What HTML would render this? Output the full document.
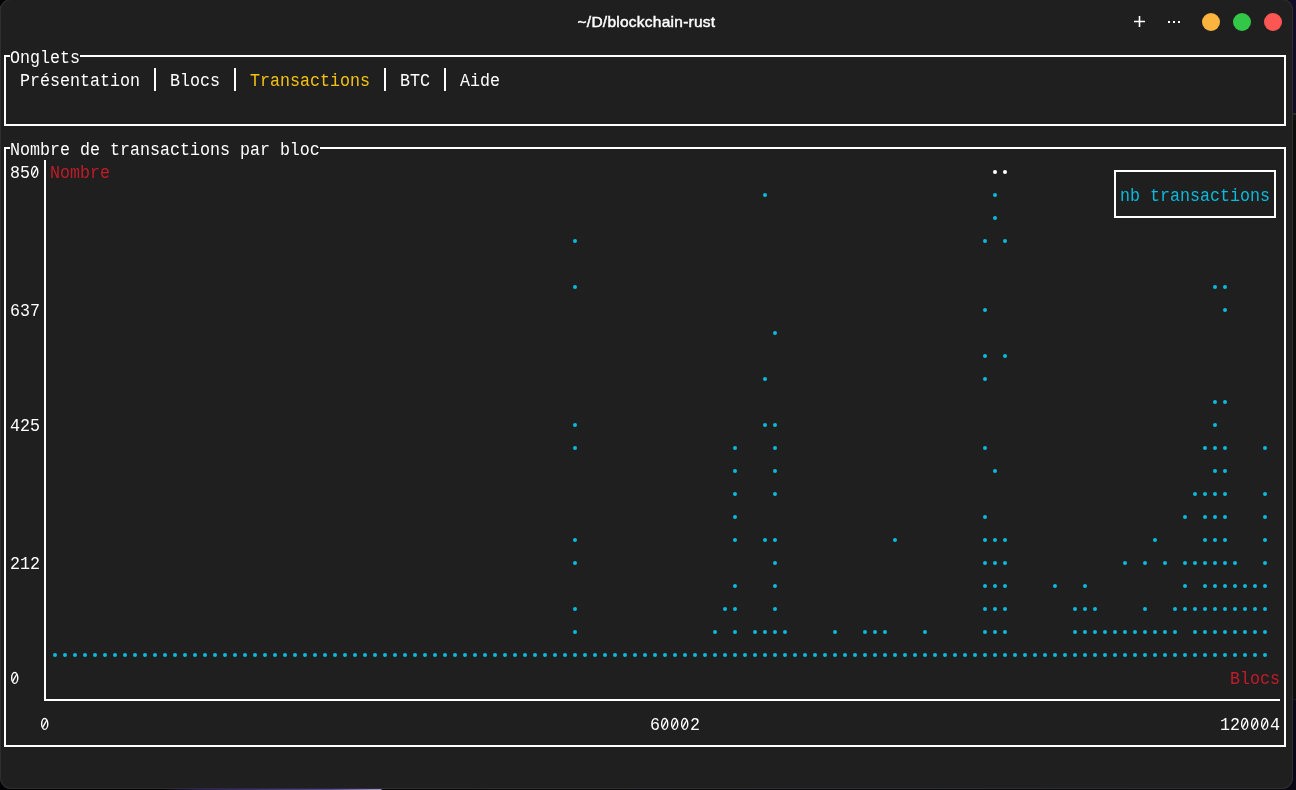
<!DOCTYPE html>
<html><head><meta charset="utf-8"><style>
html,body{margin:0;padding:0;}
body{width:1296px;height:790px;overflow:hidden;position:relative;background:#08050d;}
#wall{position:absolute;left:0;top:0;width:1296px;height:790px;background:#020104;}
#wallr{position:absolute;left:1280px;top:0;width:16px;height:790px;background:linear-gradient(180deg,#140d28 0px,#120b24 113px,#2a2a2a 113px,#2a2a2a 115px,#121212 115px,#121212 120px,#0c0c0c 120px,#0c0c0c 699px,#1a1a1a 699px,#1a1a1a 700px,#0a0716 700px,#0a0716 790px);}
#frame{position:absolute;left:0;top:-1px;width:1293px;height:790px;background:#1f1f1f;border-radius:11px;box-shadow:inset 0 0 0 1px #2e2e2e;}
#win{will-change:transform;position:absolute;left:0;top:0;width:1293px;height:789px;}
#title{position:absolute;left:0;width:1293px;top:13px;text-align:center;font:normal 15.5px "Liberation Sans",sans-serif;color:#ffffff;line-height:18px;letter-spacing:0.25px;-webkit-text-stroke:0.45px #fff;}
#term{position:absolute;left:0;top:0;width:1293px;height:789px;}
#term i{position:absolute;display:block;}
#term b{position:absolute;font-weight:normal;font-family:"Liberation Mono",monospace;font-size:16.664px;line-height:23px;white-space:pre;transform:scaleY(1.07);transform-origin:0 16px;}
#term u{position:absolute;display:block;width:4.2px;height:4.4px;border-radius:50%;}
.circ{position:absolute;width:18px;height:18px;border-radius:50%;}
</style></head><body>
<div id="wall"></div><div id="wallr"></div><div style="position:absolute;left:0;top:6px;width:1px;height:2px;background:#5b3f8c"></div><div style="position:absolute;left:0;top:789px;width:1296px;height:1px;background:linear-gradient(90deg,#000 0px,#000 160px,#2a1a5a 200px,#5a48a0 330px,#a898c8 381px,#08080c 382px,#0a0a12 1296px)"></div>
<div id="frame"></div><div id="win">
<div id="title">~/D/blockchain-rust</div>
<svg style="position:absolute;left:1133px;top:15px" width="13" height="13" viewBox="0 0 13 13"><path d="M6.5 1V12M1 6.5H12" stroke="#fff" stroke-width="1.6"/></svg>
<i style="position:absolute;left:1168px;top:21px;width:2px;height:2px;background:#fff"></i>
<i style="position:absolute;left:1173px;top:21px;width:2px;height:2px;background:#fff"></i>
<i style="position:absolute;left:1178px;top:21px;width:2px;height:2px;background:#fff"></i>
<div class="circ" style="left:1202px;top:13px;background:#fbb43e"></div>
<div class="circ" style="left:1233px;top:13px;background:#33c748"></div>
<div class="circ" style="left:1264px;top:13px;background:#fe5753"></div>
<div id="term">
<i style="left:4px;top:55px;width:6px;height:2px;background:#ffffff"></i><i style="left:80px;top:55px;width:1206px;height:2px;background:#ffffff"></i><i style="left:4px;top:124px;width:1282px;height:2px;background:#ffffff"></i><i style="left:4px;top:55px;width:2px;height:71px;background:#ffffff"></i><i style="left:1284px;top:55px;width:2px;height:71px;background:#ffffff"></i><i style="left:154px;top:68px;width:2px;height:23px;background:#ffffff"></i><i style="left:234px;top:68px;width:2px;height:23px;background:#ffffff"></i><i style="left:384px;top:68px;width:2px;height:23px;background:#ffffff"></i><i style="left:444px;top:68px;width:2px;height:23px;background:#ffffff"></i><i style="left:4px;top:147px;width:6px;height:2px;background:#ffffff"></i><i style="left:320px;top:147px;width:966px;height:2px;background:#ffffff"></i><i style="left:4px;top:745px;width:1282px;height:2px;background:#ffffff"></i><i style="left:4px;top:147px;width:2px;height:600px;background:#ffffff"></i><i style="left:1284px;top:147px;width:2px;height:600px;background:#ffffff"></i><i style="left:44px;top:160px;width:2px;height:541px;background:#ffffff"></i><i style="left:44px;top:699px;width:1236px;height:2px;background:#ffffff"></i><i style="left:1114px;top:170px;width:162px;height:2px;background:#ffffff"></i><i style="left:1114px;top:216px;width:162px;height:2px;background:#ffffff"></i><i style="left:1114px;top:170px;width:2px;height:48px;background:#ffffff"></i><i style="left:1274px;top:170px;width:2px;height:48px;background:#ffffff"></i>
<b style="left:10px;top:47px;color:#ffffff">Onglets</b><b style="left:20px;top:70px;color:#ffffff">Présentation</b><b style="left:170px;top:70px;color:#ffffff">Blocs</b><b style="left:250px;top:70px;color:#f5c211">Transactions</b><b style="left:400px;top:70px;color:#ffffff">BTC</b><b style="left:460px;top:70px;color:#ffffff">Aide</b><b style="left:10px;top:139px;color:#ffffff">Nombre de transactions par bloc</b><b style="left:10px;top:162px;color:#ffffff">85 </b><b style="left:10px;top:300px;color:#ffffff">637</b><b style="left:10px;top:415px;color:#ffffff">425</b><b style="left:10px;top:553px;color:#ffffff">212</b><b style="left:10px;top:668px;color:#ffffff"> </b><b style="left:50px;top:162px;color:#c01c28">Nombre</b><b style="left:1230px;top:668px;color:#c01c28">Blocs</b><b style="left:40px;top:714px;color:#ffffff"> </b><b style="left:650px;top:714px;color:#ffffff">6   2</b><b style="left:1220px;top:714px;color:#ffffff">12   4</b><b style="left:1120px;top:185px;color:#0ab9dc">nb transactions</b>
<u style="left:762.90px;top:192.80px;background:#0ab9dc"></u><u style="left:992.90px;top:192.80px;background:#0ab9dc"></u><u style="left:992.90px;top:215.80px;background:#0ab9dc"></u><u style="left:572.90px;top:238.80px;background:#0ab9dc"></u><u style="left:982.90px;top:238.80px;background:#0ab9dc"></u><u style="left:1002.90px;top:238.80px;background:#0ab9dc"></u><u style="left:572.90px;top:284.80px;background:#0ab9dc"></u><u style="left:1212.90px;top:284.80px;background:#0ab9dc"></u><u style="left:1222.90px;top:284.80px;background:#0ab9dc"></u><u style="left:982.90px;top:307.80px;background:#0ab9dc"></u><u style="left:1222.90px;top:307.80px;background:#0ab9dc"></u><u style="left:772.90px;top:330.80px;background:#0ab9dc"></u><u style="left:982.90px;top:353.80px;background:#0ab9dc"></u><u style="left:1002.90px;top:353.80px;background:#0ab9dc"></u><u style="left:762.90px;top:376.80px;background:#0ab9dc"></u><u style="left:982.90px;top:376.80px;background:#0ab9dc"></u><u style="left:1212.90px;top:399.80px;background:#0ab9dc"></u><u style="left:1222.90px;top:399.80px;background:#0ab9dc"></u><u style="left:572.90px;top:422.80px;background:#0ab9dc"></u><u style="left:762.90px;top:422.80px;background:#0ab9dc"></u><u style="left:772.90px;top:422.80px;background:#0ab9dc"></u><u style="left:1212.90px;top:422.80px;background:#0ab9dc"></u><u style="left:572.90px;top:445.80px;background:#0ab9dc"></u><u style="left:732.90px;top:445.80px;background:#0ab9dc"></u><u style="left:772.90px;top:445.80px;background:#0ab9dc"></u><u style="left:982.90px;top:445.80px;background:#0ab9dc"></u><u style="left:1202.90px;top:445.80px;background:#0ab9dc"></u><u style="left:1212.90px;top:445.80px;background:#0ab9dc"></u><u style="left:1222.90px;top:445.80px;background:#0ab9dc"></u><u style="left:1262.90px;top:445.80px;background:#0ab9dc"></u><u style="left:732.90px;top:468.80px;background:#0ab9dc"></u><u style="left:772.90px;top:468.80px;background:#0ab9dc"></u><u style="left:992.90px;top:468.80px;background:#0ab9dc"></u><u style="left:1212.90px;top:468.80px;background:#0ab9dc"></u><u style="left:1222.90px;top:468.80px;background:#0ab9dc"></u><u style="left:732.90px;top:491.80px;background:#0ab9dc"></u><u style="left:772.90px;top:491.80px;background:#0ab9dc"></u><u style="left:1192.90px;top:491.80px;background:#0ab9dc"></u><u style="left:1202.90px;top:491.80px;background:#0ab9dc"></u><u style="left:1212.90px;top:491.80px;background:#0ab9dc"></u><u style="left:1222.90px;top:491.80px;background:#0ab9dc"></u><u style="left:1262.90px;top:491.80px;background:#0ab9dc"></u><u style="left:732.90px;top:514.80px;background:#0ab9dc"></u><u style="left:982.90px;top:514.80px;background:#0ab9dc"></u><u style="left:1182.90px;top:514.80px;background:#0ab9dc"></u><u style="left:1202.90px;top:514.80px;background:#0ab9dc"></u><u style="left:1212.90px;top:514.80px;background:#0ab9dc"></u><u style="left:1222.90px;top:514.80px;background:#0ab9dc"></u><u style="left:1262.90px;top:514.80px;background:#0ab9dc"></u><u style="left:572.90px;top:537.80px;background:#0ab9dc"></u><u style="left:732.90px;top:537.80px;background:#0ab9dc"></u><u style="left:762.90px;top:537.80px;background:#0ab9dc"></u><u style="left:772.90px;top:537.80px;background:#0ab9dc"></u><u style="left:892.90px;top:537.80px;background:#0ab9dc"></u><u style="left:982.90px;top:537.80px;background:#0ab9dc"></u><u style="left:992.90px;top:537.80px;background:#0ab9dc"></u><u style="left:1002.90px;top:537.80px;background:#0ab9dc"></u><u style="left:1152.90px;top:537.80px;background:#0ab9dc"></u><u style="left:1202.90px;top:537.80px;background:#0ab9dc"></u><u style="left:1212.90px;top:537.80px;background:#0ab9dc"></u><u style="left:1222.90px;top:537.80px;background:#0ab9dc"></u><u style="left:1262.90px;top:537.80px;background:#0ab9dc"></u><u style="left:572.90px;top:560.80px;background:#0ab9dc"></u><u style="left:772.90px;top:560.80px;background:#0ab9dc"></u><u style="left:982.90px;top:560.80px;background:#0ab9dc"></u><u style="left:992.90px;top:560.80px;background:#0ab9dc"></u><u style="left:1002.90px;top:560.80px;background:#0ab9dc"></u><u style="left:1122.90px;top:560.80px;background:#0ab9dc"></u><u style="left:1142.90px;top:560.80px;background:#0ab9dc"></u><u style="left:1162.90px;top:560.80px;background:#0ab9dc"></u><u style="left:1182.90px;top:560.80px;background:#0ab9dc"></u><u style="left:1192.90px;top:560.80px;background:#0ab9dc"></u><u style="left:1202.90px;top:560.80px;background:#0ab9dc"></u><u style="left:1212.90px;top:560.80px;background:#0ab9dc"></u><u style="left:1222.90px;top:560.80px;background:#0ab9dc"></u><u style="left:1232.90px;top:560.80px;background:#0ab9dc"></u><u style="left:1262.90px;top:560.80px;background:#0ab9dc"></u><u style="left:732.90px;top:583.80px;background:#0ab9dc"></u><u style="left:772.90px;top:583.80px;background:#0ab9dc"></u><u style="left:982.90px;top:583.80px;background:#0ab9dc"></u><u style="left:992.90px;top:583.80px;background:#0ab9dc"></u><u style="left:1002.90px;top:583.80px;background:#0ab9dc"></u><u style="left:1052.90px;top:583.80px;background:#0ab9dc"></u><u style="left:1082.90px;top:583.80px;background:#0ab9dc"></u><u style="left:1182.90px;top:583.80px;background:#0ab9dc"></u><u style="left:1202.90px;top:583.80px;background:#0ab9dc"></u><u style="left:1212.90px;top:583.80px;background:#0ab9dc"></u><u style="left:1222.90px;top:583.80px;background:#0ab9dc"></u><u style="left:1232.90px;top:583.80px;background:#0ab9dc"></u><u style="left:1242.90px;top:583.80px;background:#0ab9dc"></u><u style="left:1252.90px;top:583.80px;background:#0ab9dc"></u><u style="left:1262.90px;top:583.80px;background:#0ab9dc"></u><u style="left:572.90px;top:606.80px;background:#0ab9dc"></u><u style="left:722.90px;top:606.80px;background:#0ab9dc"></u><u style="left:732.90px;top:606.80px;background:#0ab9dc"></u><u style="left:772.90px;top:606.80px;background:#0ab9dc"></u><u style="left:982.90px;top:606.80px;background:#0ab9dc"></u><u style="left:992.90px;top:606.80px;background:#0ab9dc"></u><u style="left:1002.90px;top:606.80px;background:#0ab9dc"></u><u style="left:1072.90px;top:606.80px;background:#0ab9dc"></u><u style="left:1082.90px;top:606.80px;background:#0ab9dc"></u><u style="left:1092.90px;top:606.80px;background:#0ab9dc"></u><u style="left:1142.90px;top:606.80px;background:#0ab9dc"></u><u style="left:1172.90px;top:606.80px;background:#0ab9dc"></u><u style="left:1182.90px;top:606.80px;background:#0ab9dc"></u><u style="left:1192.90px;top:606.80px;background:#0ab9dc"></u><u style="left:1202.90px;top:606.80px;background:#0ab9dc"></u><u style="left:1212.90px;top:606.80px;background:#0ab9dc"></u><u style="left:1222.90px;top:606.80px;background:#0ab9dc"></u><u style="left:1232.90px;top:606.80px;background:#0ab9dc"></u><u style="left:1242.90px;top:606.80px;background:#0ab9dc"></u><u style="left:1252.90px;top:606.80px;background:#0ab9dc"></u><u style="left:1262.90px;top:606.80px;background:#0ab9dc"></u><u style="left:572.90px;top:629.80px;background:#0ab9dc"></u><u style="left:712.90px;top:629.80px;background:#0ab9dc"></u><u style="left:732.90px;top:629.80px;background:#0ab9dc"></u><u style="left:752.90px;top:629.80px;background:#0ab9dc"></u><u style="left:762.90px;top:629.80px;background:#0ab9dc"></u><u style="left:772.90px;top:629.80px;background:#0ab9dc"></u><u style="left:782.90px;top:629.80px;background:#0ab9dc"></u><u style="left:832.90px;top:629.80px;background:#0ab9dc"></u><u style="left:862.90px;top:629.80px;background:#0ab9dc"></u><u style="left:872.90px;top:629.80px;background:#0ab9dc"></u><u style="left:882.90px;top:629.80px;background:#0ab9dc"></u><u style="left:922.90px;top:629.80px;background:#0ab9dc"></u><u style="left:982.90px;top:629.80px;background:#0ab9dc"></u><u style="left:992.90px;top:629.80px;background:#0ab9dc"></u><u style="left:1002.90px;top:629.80px;background:#0ab9dc"></u><u style="left:1072.90px;top:629.80px;background:#0ab9dc"></u><u style="left:1082.90px;top:629.80px;background:#0ab9dc"></u><u style="left:1092.90px;top:629.80px;background:#0ab9dc"></u><u style="left:1102.90px;top:629.80px;background:#0ab9dc"></u><u style="left:1112.90px;top:629.80px;background:#0ab9dc"></u><u style="left:1122.90px;top:629.80px;background:#0ab9dc"></u><u style="left:1132.90px;top:629.80px;background:#0ab9dc"></u><u style="left:1142.90px;top:629.80px;background:#0ab9dc"></u><u style="left:1152.90px;top:629.80px;background:#0ab9dc"></u><u style="left:1162.90px;top:629.80px;background:#0ab9dc"></u><u style="left:1172.90px;top:629.80px;background:#0ab9dc"></u><u style="left:1192.90px;top:629.80px;background:#0ab9dc"></u><u style="left:1202.90px;top:629.80px;background:#0ab9dc"></u><u style="left:1212.90px;top:629.80px;background:#0ab9dc"></u><u style="left:1222.90px;top:629.80px;background:#0ab9dc"></u><u style="left:1232.90px;top:629.80px;background:#0ab9dc"></u><u style="left:1242.90px;top:629.80px;background:#0ab9dc"></u><u style="left:1252.90px;top:629.80px;background:#0ab9dc"></u><u style="left:1262.90px;top:629.80px;background:#0ab9dc"></u><u style="left:52.90px;top:652.80px;background:#0ab9dc"></u><u style="left:62.90px;top:652.80px;background:#0ab9dc"></u><u style="left:72.90px;top:652.80px;background:#0ab9dc"></u><u style="left:82.90px;top:652.80px;background:#0ab9dc"></u><u style="left:92.90px;top:652.80px;background:#0ab9dc"></u><u style="left:102.90px;top:652.80px;background:#0ab9dc"></u><u style="left:112.90px;top:652.80px;background:#0ab9dc"></u><u style="left:122.90px;top:652.80px;background:#0ab9dc"></u><u style="left:132.90px;top:652.80px;background:#0ab9dc"></u><u style="left:142.90px;top:652.80px;background:#0ab9dc"></u><u style="left:152.90px;top:652.80px;background:#0ab9dc"></u><u style="left:162.90px;top:652.80px;background:#0ab9dc"></u><u style="left:172.90px;top:652.80px;background:#0ab9dc"></u><u style="left:182.90px;top:652.80px;background:#0ab9dc"></u><u style="left:192.90px;top:652.80px;background:#0ab9dc"></u><u style="left:202.90px;top:652.80px;background:#0ab9dc"></u><u style="left:212.90px;top:652.80px;background:#0ab9dc"></u><u style="left:222.90px;top:652.80px;background:#0ab9dc"></u><u style="left:232.90px;top:652.80px;background:#0ab9dc"></u><u style="left:242.90px;top:652.80px;background:#0ab9dc"></u><u style="left:252.90px;top:652.80px;background:#0ab9dc"></u><u style="left:262.90px;top:652.80px;background:#0ab9dc"></u><u style="left:272.90px;top:652.80px;background:#0ab9dc"></u><u style="left:282.90px;top:652.80px;background:#0ab9dc"></u><u style="left:292.90px;top:652.80px;background:#0ab9dc"></u><u style="left:302.90px;top:652.80px;background:#0ab9dc"></u><u style="left:312.90px;top:652.80px;background:#0ab9dc"></u><u style="left:322.90px;top:652.80px;background:#0ab9dc"></u><u style="left:332.90px;top:652.80px;background:#0ab9dc"></u><u style="left:342.90px;top:652.80px;background:#0ab9dc"></u><u style="left:352.90px;top:652.80px;background:#0ab9dc"></u><u style="left:362.90px;top:652.80px;background:#0ab9dc"></u><u style="left:372.90px;top:652.80px;background:#0ab9dc"></u><u style="left:382.90px;top:652.80px;background:#0ab9dc"></u><u style="left:392.90px;top:652.80px;background:#0ab9dc"></u><u style="left:402.90px;top:652.80px;background:#0ab9dc"></u><u style="left:412.90px;top:652.80px;background:#0ab9dc"></u><u style="left:422.90px;top:652.80px;background:#0ab9dc"></u><u style="left:432.90px;top:652.80px;background:#0ab9dc"></u><u style="left:442.90px;top:652.80px;background:#0ab9dc"></u><u style="left:452.90px;top:652.80px;background:#0ab9dc"></u><u style="left:462.90px;top:652.80px;background:#0ab9dc"></u><u style="left:472.90px;top:652.80px;background:#0ab9dc"></u><u style="left:482.90px;top:652.80px;background:#0ab9dc"></u><u style="left:492.90px;top:652.80px;background:#0ab9dc"></u><u style="left:502.90px;top:652.80px;background:#0ab9dc"></u><u style="left:512.90px;top:652.80px;background:#0ab9dc"></u><u style="left:522.90px;top:652.80px;background:#0ab9dc"></u><u style="left:532.90px;top:652.80px;background:#0ab9dc"></u><u style="left:542.90px;top:652.80px;background:#0ab9dc"></u><u style="left:552.90px;top:652.80px;background:#0ab9dc"></u><u style="left:562.90px;top:652.80px;background:#0ab9dc"></u><u style="left:572.90px;top:652.80px;background:#0ab9dc"></u><u style="left:582.90px;top:652.80px;background:#0ab9dc"></u><u style="left:592.90px;top:652.80px;background:#0ab9dc"></u><u style="left:602.90px;top:652.80px;background:#0ab9dc"></u><u style="left:612.90px;top:652.80px;background:#0ab9dc"></u><u style="left:622.90px;top:652.80px;background:#0ab9dc"></u><u style="left:632.90px;top:652.80px;background:#0ab9dc"></u><u style="left:642.90px;top:652.80px;background:#0ab9dc"></u><u style="left:652.90px;top:652.80px;background:#0ab9dc"></u><u style="left:662.90px;top:652.80px;background:#0ab9dc"></u><u style="left:672.90px;top:652.80px;background:#0ab9dc"></u><u style="left:682.90px;top:652.80px;background:#0ab9dc"></u><u style="left:692.90px;top:652.80px;background:#0ab9dc"></u><u style="left:702.90px;top:652.80px;background:#0ab9dc"></u><u style="left:712.90px;top:652.80px;background:#0ab9dc"></u><u style="left:722.90px;top:652.80px;background:#0ab9dc"></u><u style="left:732.90px;top:652.80px;background:#0ab9dc"></u><u style="left:742.90px;top:652.80px;background:#0ab9dc"></u><u style="left:752.90px;top:652.80px;background:#0ab9dc"></u><u style="left:762.90px;top:652.80px;background:#0ab9dc"></u><u style="left:772.90px;top:652.80px;background:#0ab9dc"></u><u style="left:782.90px;top:652.80px;background:#0ab9dc"></u><u style="left:792.90px;top:652.80px;background:#0ab9dc"></u><u style="left:802.90px;top:652.80px;background:#0ab9dc"></u><u style="left:812.90px;top:652.80px;background:#0ab9dc"></u><u style="left:822.90px;top:652.80px;background:#0ab9dc"></u><u style="left:832.90px;top:652.80px;background:#0ab9dc"></u><u style="left:842.90px;top:652.80px;background:#0ab9dc"></u><u style="left:852.90px;top:652.80px;background:#0ab9dc"></u><u style="left:862.90px;top:652.80px;background:#0ab9dc"></u><u style="left:872.90px;top:652.80px;background:#0ab9dc"></u><u style="left:882.90px;top:652.80px;background:#0ab9dc"></u><u style="left:892.90px;top:652.80px;background:#0ab9dc"></u><u style="left:902.90px;top:652.80px;background:#0ab9dc"></u><u style="left:912.90px;top:652.80px;background:#0ab9dc"></u><u style="left:922.90px;top:652.80px;background:#0ab9dc"></u><u style="left:932.90px;top:652.80px;background:#0ab9dc"></u><u style="left:942.90px;top:652.80px;background:#0ab9dc"></u><u style="left:952.90px;top:652.80px;background:#0ab9dc"></u><u style="left:962.90px;top:652.80px;background:#0ab9dc"></u><u style="left:972.90px;top:652.80px;background:#0ab9dc"></u><u style="left:982.90px;top:652.80px;background:#0ab9dc"></u><u style="left:992.90px;top:652.80px;background:#0ab9dc"></u><u style="left:1002.90px;top:652.80px;background:#0ab9dc"></u><u style="left:1012.90px;top:652.80px;background:#0ab9dc"></u><u style="left:1022.90px;top:652.80px;background:#0ab9dc"></u><u style="left:1032.90px;top:652.80px;background:#0ab9dc"></u><u style="left:1042.90px;top:652.80px;background:#0ab9dc"></u><u style="left:1052.90px;top:652.80px;background:#0ab9dc"></u><u style="left:1062.90px;top:652.80px;background:#0ab9dc"></u><u style="left:1072.90px;top:652.80px;background:#0ab9dc"></u><u style="left:1082.90px;top:652.80px;background:#0ab9dc"></u><u style="left:1092.90px;top:652.80px;background:#0ab9dc"></u><u style="left:1102.90px;top:652.80px;background:#0ab9dc"></u><u style="left:1112.90px;top:652.80px;background:#0ab9dc"></u><u style="left:1122.90px;top:652.80px;background:#0ab9dc"></u><u style="left:1132.90px;top:652.80px;background:#0ab9dc"></u><u style="left:1142.90px;top:652.80px;background:#0ab9dc"></u><u style="left:1152.90px;top:652.80px;background:#0ab9dc"></u><u style="left:1162.90px;top:652.80px;background:#0ab9dc"></u><u style="left:1172.90px;top:652.80px;background:#0ab9dc"></u><u style="left:1182.90px;top:652.80px;background:#0ab9dc"></u><u style="left:1192.90px;top:652.80px;background:#0ab9dc"></u><u style="left:1202.90px;top:652.80px;background:#0ab9dc"></u><u style="left:1212.90px;top:652.80px;background:#0ab9dc"></u><u style="left:1222.90px;top:652.80px;background:#0ab9dc"></u><u style="left:1232.90px;top:652.80px;background:#0ab9dc"></u><u style="left:1242.90px;top:652.80px;background:#0ab9dc"></u><u style="left:1252.90px;top:652.80px;background:#0ab9dc"></u><u style="left:1262.90px;top:652.80px;background:#0ab9dc"></u><u style="left:992.90px;top:169.80px;background:#ffffff"></u><u style="left:1002.90px;top:169.80px;background:#ffffff"></u>
<svg style="position:absolute;left:0;top:0" width="1293" height="789"><ellipse cx="34.7" cy="171.9" rx="3.05" ry="5.45" fill="none" stroke="#ffffff" stroke-width="1.45"/><path d="M36.9 168.0L32.5 175.6" stroke="#ffffff" stroke-width="1.4"/><ellipse cx="14.7" cy="677.9" rx="3.05" ry="5.45" fill="none" stroke="#ffffff" stroke-width="1.45"/><path d="M16.9 674.0L12.5 681.6" stroke="#ffffff" stroke-width="1.4"/><ellipse cx="44.7" cy="723.9" rx="3.05" ry="5.45" fill="none" stroke="#ffffff" stroke-width="1.45"/><path d="M46.9 720.0L42.5 727.6" stroke="#ffffff" stroke-width="1.4"/><ellipse cx="664.7" cy="723.9" rx="3.05" ry="5.45" fill="none" stroke="#ffffff" stroke-width="1.45"/><path d="M666.9 720.0L662.5 727.6" stroke="#ffffff" stroke-width="1.4"/><ellipse cx="674.7" cy="723.9" rx="3.05" ry="5.45" fill="none" stroke="#ffffff" stroke-width="1.45"/><path d="M676.9 720.0L672.5 727.6" stroke="#ffffff" stroke-width="1.4"/><ellipse cx="684.7" cy="723.9" rx="3.05" ry="5.45" fill="none" stroke="#ffffff" stroke-width="1.45"/><path d="M686.9 720.0L682.5 727.6" stroke="#ffffff" stroke-width="1.4"/><ellipse cx="1244.7" cy="723.9" rx="3.05" ry="5.45" fill="none" stroke="#ffffff" stroke-width="1.45"/><path d="M1246.9 720.0L1242.5 727.6" stroke="#ffffff" stroke-width="1.4"/><ellipse cx="1254.7" cy="723.9" rx="3.05" ry="5.45" fill="none" stroke="#ffffff" stroke-width="1.45"/><path d="M1256.9 720.0L1252.5 727.6" stroke="#ffffff" stroke-width="1.4"/><ellipse cx="1264.7" cy="723.9" rx="3.05" ry="5.45" fill="none" stroke="#ffffff" stroke-width="1.45"/><path d="M1266.9 720.0L1262.5 727.6" stroke="#ffffff" stroke-width="1.4"/></svg>
</div>
</div>
</body></html>
